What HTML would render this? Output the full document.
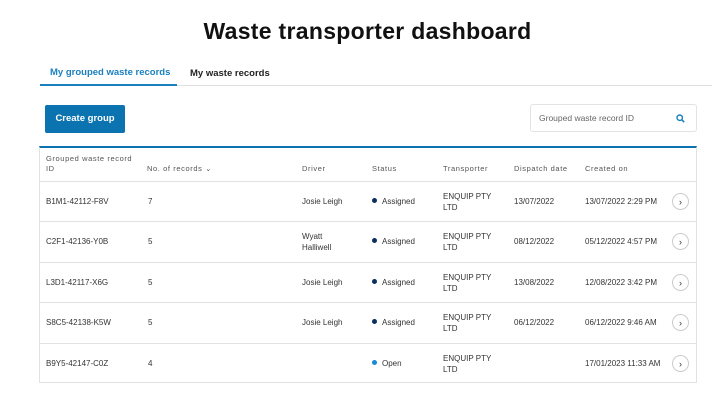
<!DOCTYPE html><html><head><style>
body{margin:0;width:720px;height:400px;background:#fff;font-family:"Liberation Sans",sans-serif;position:relative;overflow:hidden;color:#333}
.a{position:absolute;white-space:nowrap}
h1{position:absolute;left:0;width:735px;text-align:center;top:18px;margin:0;font-size:23px;font-weight:bold;color:#111;letter-spacing:.3px}
.th{font-size:7.5px;color:#555;letter-spacing:.6px}
.td{font-size:8px;color:#333}
.dot{display:inline-block;width:5px;height:5px;border-radius:50%;background:#0b2f5c;margin-right:5px;vertical-align:1px}
.cb{position:absolute;left:672px;width:17px;height:17px;border:1px solid #ccc;border-radius:50%;font-size:9px;text-align:center;line-height:17px;color:#333;box-sizing:border-box}
.hl{position:absolute;left:39px;width:658px;height:1px;background:#e2e2e2}
</style></head><body>
<h1>Waste transporter dashboard</h1>
<div class="a" style="left:50px;top:67px;font-size:9.5px;color:#1a7fbf;font-weight:bold">My grouped waste records</div>
<div class="a" style="left:190px;top:68px;font-size:9.5px;color:#222;font-weight:bold">My waste records</div>
<div class="a" style="left:40px;top:85px;width:672px;height:1px;background:#e0e0e0"></div>
<div class="a" style="left:40px;top:84px;width:137px;height:2px;background:#1a7fbf"></div>
<div class="a" style="left:45px;top:105px;width:80px;height:28px;background:#0a73b0;border-radius:2px;color:#fff;font-size:9.5px;font-weight:bold;text-align:center;line-height:28px">Create group</div>
<div class="a" style="left:530px;top:104px;width:167px;height:28px;border:1px solid #e3e3e3;border-radius:3px;box-sizing:border-box"></div>
<div class="a" style="left:539px;top:113px;font-size:8.5px;color:#666">Grouped waste record ID</div>
<svg class="a" style="left:676px;top:114px" width="9" height="9" viewBox="0 0 9 9"><circle cx="3.7" cy="3.7" r="2.7" fill="none" stroke="#1a7fbf" stroke-width="1.4"/><line x1="5.7" y1="5.7" x2="8.2" y2="8.2" stroke="#1a7fbf" stroke-width="1.6"/></svg>
<div class="a" style="left:39px;top:146px;width:658px;height:237px;border:1px solid #e2e2e2;border-top:2px solid #0a73b0;box-sizing:border-box"></div>
<div class="a th" style="left:46px;top:154px;line-height:10px">Grouped waste record<br>ID</div>
<div class="a th" style="left:147px;top:164px">No. of records ⌄</div>
<div class="a th" style="left:302px;top:164px">Driver</div>
<div class="a th" style="left:372px;top:164px">Status</div>
<div class="a th" style="left:443px;top:164px">Transporter</div>
<div class="a th" style="left:514px;top:164px">Dispatch date</div>
<div class="a th" style="left:585px;top:164px">Created on</div>
<div class="hl" style="top:181px"></div><div class="hl" style="top:221px"></div><div class="hl" style="top:262px"></div><div class="hl" style="top:302px"></div><div class="hl" style="top:343px"></div>

<div class="a td" style="left:46px;top:197px">B1M1-42112-F8V</div><div class="a td" style="left:148px;top:197px">7</div><div class="a td" style="left:302px;top:197px">Josie Leigh</div><div class="a td" style="left:372px;top:197px"><span class="dot"></span>Assigned</div><div class="a td" style="left:443px;top:191px;line-height:11px">ENQUIP PTY<br>LTD</div><div class="a td" style="left:514px;top:197px">13/07/2022</div><div class="a td" style="left:585px;top:197px">13/07/2022 2:29 PM</div><div class="cb" style="top:193px">›</div>

<div class="a td" style="left:46px;top:237px">C2F1-42136-Y0B</div><div class="a td" style="left:148px;top:237px">5</div><div class="a td" style="left:302px;top:231px;line-height:11px">Wyatt<br>Halliwell</div><div class="a td" style="left:372px;top:237px"><span class="dot"></span>Assigned</div><div class="a td" style="left:443px;top:231px;line-height:11px">ENQUIP PTY<br>LTD</div><div class="a td" style="left:514px;top:237px">08/12/2022</div><div class="a td" style="left:585px;top:237px">05/12/2022 4:57 PM</div><div class="cb" style="top:233px">›</div>

<div class="a td" style="left:46px;top:278px">L3D1-42117-X6G</div><div class="a td" style="left:148px;top:278px">5</div><div class="a td" style="left:302px;top:278px">Josie Leigh</div><div class="a td" style="left:372px;top:278px"><span class="dot"></span>Assigned</div><div class="a td" style="left:443px;top:272px;line-height:11px">ENQUIP PTY<br>LTD</div><div class="a td" style="left:514px;top:278px">13/08/2022</div><div class="a td" style="left:585px;top:278px">12/08/2022 3:42 PM</div><div class="cb" style="top:274px">›</div>

<div class="a td" style="left:46px;top:318px">S8C5-42138-K5W</div><div class="a td" style="left:148px;top:318px">5</div><div class="a td" style="left:302px;top:318px">Josie Leigh</div><div class="a td" style="left:372px;top:318px"><span class="dot"></span>Assigned</div><div class="a td" style="left:443px;top:312px;line-height:11px">ENQUIP PTY<br>LTD</div><div class="a td" style="left:514px;top:318px">06/12/2022</div><div class="a td" style="left:585px;top:318px">06/12/2022 9:46 AM</div><div class="cb" style="top:314px">›</div>

<div class="a td" style="left:46px;top:359px">B9Y5-42147-C0Z</div><div class="a td" style="left:148px;top:359px">4</div><div class="a td" style="left:372px;top:359px"><span class="dot" style="background:#1a8ad4"></span>Open</div><div class="a td" style="left:443px;top:353px;line-height:11px">ENQUIP PTY<br>LTD</div><div class="a td" style="left:585px;top:359px">17/01/2023 11:33 AM</div><div class="cb" style="top:355px">›</div>
</body></html>
